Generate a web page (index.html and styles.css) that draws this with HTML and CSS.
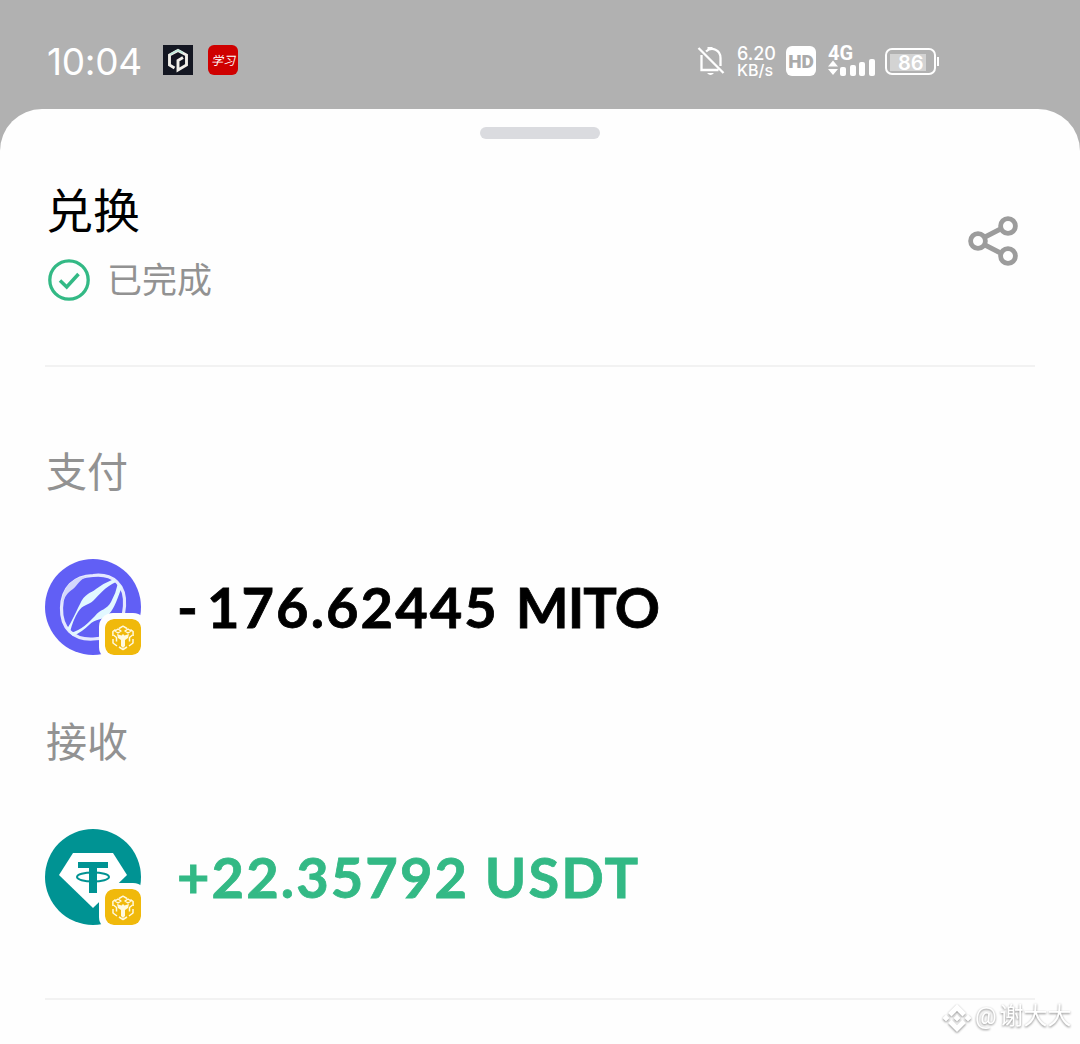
FILE: index.html
```
<!DOCTYPE html>
<html lang="zh-CN">
<head>
    <meta charset="UTF-8">
    <meta name="viewport" content="width=device-width, initial-scale=1.0">
    <title>兑换</title>
    <link rel="stylesheet" href="styles.css">
</head>
<body>
    <svg class="defs" width="0" height="0">
        <symbol id="bnb" viewBox="0 0 36 36">
            <rect width="36" height="36" rx="9" fill="#f0b90b"/>
            <g fill="none" stroke="#fff9df" stroke-width="1.5" stroke-linejoin="round">
                <path d="M14 9.5l4-2.3 4 2.3M10.5 10.5l-2.6 2v4.5M25.5 10.5l2.6 2v4.5M8 20v4l4 3M28 20v4l-4 3M14 28l4 2.500 4-2.500"/>
                <path d="M13 10l3 2-3 2-3-2zM23 10l3 2-3 2-3-2zM8.500 16l3 2.500v4M27.500 16l-3 2.500v4"/>
            </g>
            <path d="M12 15l4.500 1.500 1.500-1.500 1.500 1.500 4.500-1.500-1 4-3 2v6l-2 2-2-2v-6l-3-2z" fill="#fff9df"/>
        </symbol>
    </svg>

    <header class="status">
        <span class="time">10:04</span>
        <svg class="app" width="30" height="30" viewBox="0 0 30 30">
            <rect width="30" height="30" fill="#141722"/>
            <path d="M11.500 23L6.500 20V10L15 5.500 23.500 10v10L15 25v-9.500l5-3" fill="none" stroke="#f1efe9" stroke-width="2.900"/>
            <path d="M7 9.500l8-4.300L20 8" fill="none" stroke="#bcebdc" stroke-width="1.500"/>
        </svg>
        <span class="study">学习</span>
        <svg class="bell" width="28" height="32" viewBox="0 0 28 32">
            <g fill="none" stroke="#fff" stroke-width="2.300">
                <path d="M1.500 3l25 25M4.500 10v15h17M9 6.500C15 1 23.500 5 23.500 13v8"/>
                <path d="M10.500 3.500h5" stroke-width="3"/>
            </g>
            <path d="M10 28h7q-3.500 4-7 0z" fill="#fff"/>
        </svg>
        <div class="speed"><span>6.20</span><span class="unit">KB/s</span></div>
        <span class="hd">HD</span>
        <div class="signal">
            <span class="net">4G</span>
            <svg width="48" height="17" viewBox="0 0 48 17" fill="#fff">
                <path d="M0 7.500L5 1.500l5 6zM0 10l5 6 5-6z"/>
                <rect x="12" y="8" width="6" height="9" rx="2"/>
                <rect x="22" y="6" width="6" height="11" rx="2"/>
                <rect x="31" y="3" width="6" height="14" rx="2"/>
                <rect x="41" y="0" width="6" height="17" rx="2"/>
            </svg>
        </div>
        <div class="battery"><span class="level">86</span></div>
        <span class="cap"></span>
    </header>

    <main class="sheet">
        <div class="handle"></div>
        <section class="head">
            <div>
                <h1>兑换</h1>
                <div class="done">
                    <svg width="42" height="42" viewBox="0 0 42 42" fill="none" stroke="#33b985">
                        <circle cx="21" cy="21" r="19.200" stroke-width="3.300"/>
                        <path d="M12 21.500l6.700 6.500L30.500 15" stroke-width="3.500"/>
                    </svg>
                    <span class="label">已完成</span>
                </div>
            </div>
            <svg class="share" width="50" height="50" viewBox="0 0 50 50" fill="none" stroke="#9c9c9c" stroke-width="4.800">
                <circle cx="10" cy="25" r="7.400"/>
                <circle cx="40" cy="10" r="7.400"/>
                <circle cx="40" cy="40" r="7.400"/>
                <path d="M16.500 21.200L33.500 12.500M16.500 28.800l17 8.700" stroke-width="5"/>
            </svg>
        </section>

        <section class="trade">
            <h2>支付</h2>
            <div class="row">
                <div class="coin">
                    <svg width="96" height="96" viewBox="0 0 96 96">
                        <circle cx="48" cy="48" r="48" fill="#615ff5"/>
                        <path d="M48 16.500C68 14 81 26 79.500 47S67 80 48 80C28 81 16 69 16.500 49S29 17 48 16.500z" fill="none" stroke="#e4e8ff" stroke-width="3.200"/>
                        <!-- left shade and the two twisted ribbons -->
                        <path d="M17 44C18 26 29 18 44 17C34 20 33 26 28 30C22 34 20 38 17 44z" fill="#d3d7fb"/>
                        <path d="M22 70C27 62 30 55 35 45C39 35 46 34 51 30Q59 24 69 20L71 23C60 28 54 36 49 41C43 47 38 45 33 53Q28 61 25 73z" fill="#e2f8ff"/>
                        <path d="M25 74C37 71 44 63 50 57C55 50 62 51 66 43Q71 34 73 24L77 28C73 37 70 49 64 55C57 62 51 59 44 66Q37 73 28 77z" fill="#e2f8ff"/>
                    </svg>
                    <svg class="chain"><use href="#bnb"/></svg>
                </div>
                <span class="amount"><span class="minus">-</span>176.62445<span class="mito"> MITO</span></span>
            </div>
        </section>

        <section class="trade">
            <h2>接收</h2>
            <div class="row">
                <div class="coin">
                    <svg width="96" height="96" viewBox="0 0 96 96">
                        <circle cx="48" cy="48" r="48" fill="#009393"/>
                        <path d="M28 24h40l14 22-34 33-34-33z" fill="#fff"/>
                        <path d="M33 33h30v6H52v25h-8V39H33z" fill="#009393"/>
                        <ellipse cx="48" cy="48" rx="16" ry="4.500" fill="none" stroke="#009393" stroke-width="2"/>
                    </svg>
                    <svg class="chain"><use href="#bnb"/></svg>
                </div>
                <span class="amount receive">+22.35792 USDT</span>
            </div>
        </section>
        <div class="line"></div>
    </main>

    <div class="watermark">
        <svg width="30" height="30" viewBox="0 0 30 30" fill="#fff">
            <path d="M15 1l9 9-3.500 3.500L15 8l-5.500 5.500L6 10zM15 29l9-9-3.500-3.500L15 22l-5.500-5.500L6 20zM15 11.500l3.500 3.500-3.500 3.500-3.500-3.500zM4 11.500L7.500 15 4 18.500.5 15zM26 11.500l3.500 3.500-3.500 3.500-3.500-3.500z"/>
        </svg>
        <span class="at">@</span>
        <span class="name">谢大大</span>
    </div>
</body>
</html>
```
FILE: styles.css
```
* {
    box-sizing: border-box;
}
body {
    margin: 0;
    height: 1044px;
    overflow: hidden;
    background-color: #b1b1b1;
    font-family: "Noto Sans CJK SC", sans-serif;
}
.defs {
    position: absolute;
}
.status {
    display: flex;
    height: 109px;
    padding: 45px 0 0 47px;
    color: white;
    font-family: Roboto, sans-serif;
}
.time {
    width: 116px;
    font-family: Inter, sans-serif;
    font-size: 37px;
    line-height: 33px;
    letter-spacing: -0.3px;
}
.study {
    width: 30px;
    height: 30px;
    margin-left: 15px;
    border-radius: 6px;
    background-color: #cf0000;
    font: italic 12px/30px "Noto Sans CJK SC", sans-serif;
    text-align: center;
}
.bell {
    margin-left: 459px;
}
.speed {
    display: flex;
    flex-direction: column;
    width: 40px;
    margin-left: 12px;
    font-family: Inter, sans-serif;
    font-size: 18px;
    line-height: 17px;
    font-weight: 500;
}
.unit {
    font-size: 16px;
    line-height: 16px;
}
.hd {
    width: 30px;
    height: 30px;
    margin: 1px 0 0 9px;
    border-radius: 6px;
    background-color: white;
    color: #aaa;
    font-size: 19px;
    line-height: 31px;
    font-weight: 900;
    text-align: center;
}
.signal {
    display: flex;
    flex-direction: column;
    width: 48px;
    margin-left: 12px;
}
.net {
    height: 14px;
    font-size: 20px;
    line-height: 17px;
    font-weight: 700;
}
.battery {
    width: 51px;
    height: 27px;
    margin: 3px 0 0 9px;
    padding: 3px;
    border: 2px solid white;
    border-radius: 7px;
}
.level {
    display: block;
    width: 36px;
    height: 17px;
    margin-top: 1px;
    padding-left: 8px;
    background-color: #d3d3d3;
    font-family: Inter, sans-serif;
    font-size: 20px;
    line-height: 18px;
    font-weight: 600;
}
.cap {
    width: 2px;
    height: 9px;
    margin: 12px 0 0 1px;
    background-color: white;
}
.sheet {
    height: 935px;
    padding: 18px 45px 0;
    border-radius: 42px 42px 0 0;
    background-color: #fefefe;
}
.handle {
    width: 120px;
    height: 12px;
    margin: 0 auto;
    border-radius: 6px;
    background-color: #dadbdf;
}
.head {
    display: flex;
    justify-content: space-between;
    height: 228px;
    padding: 39px 17px 0 1px;
    border-bottom: 2px solid #f2f2f2;
}
h1 {
    margin: 0;
    font-size: 47px;
    line-height: 60px;
    font-weight: 400;
}
.done {
    display: flex;
    gap: 17px;
    height: 42px;
    margin: 21px 0 0 2px;
    color: #929292;
    font-size: 35px;
}
.label {
    line-height: 37px;
}
.share {
    margin-top: 38px;
}
.trade {
    height: 270px;
    padding-top: 72px;
}
h2 {
    margin: 0;
    padding-left: 1px;
    color: #929292;
    font-size: 41px;
    line-height: 60px;
    font-weight: 400;
}
.row {
    display: flex;
    align-items: center;
    height: 96px;
    margin-top: 60px;
}
.coin {
    position: relative;
    width: 96px;
    height: 96px;
}
.chain {
    position: absolute;
    left: 54px;
    top: 54px;
    width: 48px;
    height: 48px;
    padding: 6px;
    border-radius: 14px;
    background-color: #fefefe;
}
.amount {
    margin-left: 36px;
    font-family: Lato, sans-serif;
    font-size: 56px;
    line-height: 94px;
    font-weight: 700;
    letter-spacing: 2.1px;
    white-space: nowrap;
    -webkit-text-stroke: 0.8px;
}
.minus {
    letter-spacing: 9px;
}
.mito {
    letter-spacing: -0.9px;
    word-spacing: 4px;
}
.receive {
    color: #33b985;
}
.line {
    height: 2px;
    margin-top: 91px;
    background-color: #f2f2f2;
}
.watermark {
    position: absolute;
    left: 942px;
    top: 1000px;
    display: flex;
    align-items: center;
    height: 36px;
    color: white;
    font-size: 24px;
    filter: drop-shadow(0 1px 1px #888);
}
.at {
    margin: 0 3px 4px;
    font-family: Roboto, sans-serif;
    line-height: 30px;
}
.name {
    height: 36px;
    line-height: 28px;
}
```
